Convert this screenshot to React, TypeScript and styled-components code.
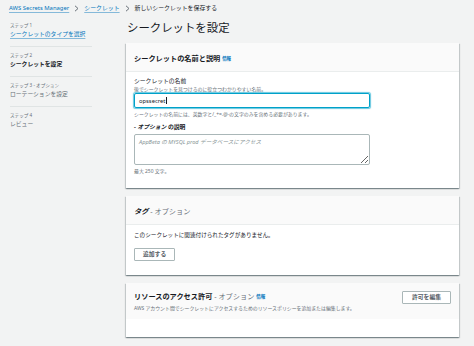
import React from 'react';
import styled, { createGlobalStyle, css } from 'styled-components';

const GlobalStyle = createGlobalStyle`
  html, body {
    margin: 0;
    padding: 0;
    background: #f2f3f3;
  }
  body {
    font-family: "Noto Sans", "Noto Sans CJK JP", sans-serif;
    color: #16191f;
  }
  * {
    box-sizing: border-box;
  }
`;

const steps = [
  { label: 'ステップ 1', name: 'シークレットのタイプを選択', state: 'link' },
  { label: 'ステップ 2', name: 'シークレットを設定', state: 'current' },
  { label: 'ステップ 3 - オプション', name: 'ローテーションを設定', state: 'idle' },
  { label: 'ステップ 4', name: 'レビュー', state: 'idle' },
] as const;

type StepState = (typeof steps)[number]['state'];

const Chevron = () => (
  <svg width="5" height="7" viewBox="0 0 5 7">
    <polyline points="1,0.8 4,3.5 1,6.2" fill="none" stroke="#687078" strokeWidth="1" />
  </svg>
);

const App: React.FC = () => {
  return (
    <Page>
      <GlobalStyle />
      <Breadcrumbs>
        <Crumb href="#">AWS Secrets Manager</Crumb>
        <Chevron />
        <Crumb href="#">シークレット</Crumb>
        <Chevron />
        <CurrentCrumb>新しいシークレットを保存する</CurrentCrumb>
      </Breadcrumbs>

      <Main>
        <Nav>
          {steps.map((step, i) => (
            <Step key={step.label} last={i === steps.length - 1}>
              <StepLabel>{step.label}</StepLabel>
              <StepName state={step.state}>{step.name}</StepName>
            </Step>
          ))}
        </Nav>

        <Content>
          <Title>シークレットを設定</Title>

          <Card>
            <CardHeader>
              <HeaderText>
                <CardTitle>
                  シークレットの名前と説明 <Info>情報</Info>
                </CardTitle>
              </HeaderText>
            </CardHeader>
            <CardBody pad="5px 8px 13px">
              <FieldLabel>シークレットの名前</FieldLabel>
              <Hint>後でシークレットを見つけるのに役立つわかりやすい名前。</Hint>
              <TextInput>
                opssecret
                <Caret />
              </TextInput>
              <Hint top={3}>
                シークレットの名前には、英数字と/_+=.@-の文字のみを含める必要があります。
              </Hint>
              <FieldLabel top={5}>
                - <i>オプション</i> の説明
              </FieldLabel>
              <TextArea placeholder="AppBeta の MYSQL prod データベースにアクセス" />
              <Hint top={3}>最大 250 文字。</Hint>
            </CardBody>
          </Card>

          <Card>
            <CardHeader>
              <HeaderText>
                <CardTitle>
                  <i>タグ</i> <Optional>- オプション</Optional>
                </CardTitle>
              </HeaderText>
            </CardHeader>
            <CardBody pad="6px 8px 14px">
              <BodyText>このシークレットに関連付けられたタグがありません。</BodyText>
              <Button>追加する</Button>
            </CardBody>
          </Card>

          <Card>
            <CardHeader plain>
              <HeaderText>
                <CardTitle>
                  リソースのアクセス許可 <Optional>- オプション</Optional> <Info>情報</Info>
                </CardTitle>
                <HeaderDesc>
                  AWS アカウント間でシークレットにアクセスするためのリソースポリシーを追加または編集します。
                </HeaderDesc>
              </HeaderText>
              <Button small>許可を編集</Button>
            </CardHeader>
            <CardBody pad="0" style={{ height: 18 }} />
          </Card>
        </Content>
      </Main>
    </Page>
  );
};

export default App;

const Page = styled.div`
  width: 474px;
  height: 346px;
  overflow: hidden;
`;

const Breadcrumbs = styled.nav`
  display: flex;
  align-items: center;
  gap: 5px;
  height: 14px;
  padding: 2px 0 0 9px;
  font-size: 5.9px;
  line-height: 12px;
`;

const Crumb = styled.a`
  color: #0073bb;
  text-decoration: underline;
  text-decoration-color: rgba(0, 115, 187, 0.45);
  text-underline-offset: 1.5px;
`;

const CurrentCrumb = styled.span`
  color: #16191f;
`;

const Main = styled.div`
  display: grid;
  grid-template-columns: 82px 1fr;
  column-gap: 34px;
  padding: 0 15px 0 10px;
`;

const Nav = styled.div`
  display: flex;
  flex-direction: column;
  padding-top: 3px;
`;

const Step = styled.div<{ last?: boolean }>`
  display: flex;
  flex-direction: column;
  padding: 4px 0 7px;
  border-bottom: ${(p) => (p.last ? 'none' : '1px solid #e0e4e4')};
`;

const StepLabel = styled.span`
  font-size: 4.6px;
  line-height: 8px;
  color: #687078;
`;

const StepName = styled.span<{ state: StepState }>`
  font-size: 5.8px;
  line-height: 10px;
  color: #687078;
  ${(p) =>
    p.state === 'link' &&
    css`
      color: #0073bb;
      text-decoration: underline;
      text-decoration-color: rgba(0, 115, 187, 0.45);
      text-underline-offset: 1.5px;
    `}
  ${(p) =>
    p.state === 'current' &&
    css`
      color: #16191f;
      font-weight: 700;
    `}
`;

const Content = styled.div`
  display: flex;
  flex-direction: column;
  gap: 8px;
`;

const Title = styled.h1`
  margin: 6px 0 -1px 1px;
  font-size: 11.4px;
  line-height: 16px;
  font-weight: 400;
  color: #16191f;
`;

const Card = styled.section`
  background: #fff;
  box-shadow: 0 1px 1px 0 rgba(0, 28, 36, 0.3), 1px 1px 1px 0 rgba(0, 28, 36, 0.15),
    -1px 1px 1px 0 rgba(0, 28, 36, 0.15);
`;

const CardHeader = styled.header<{ plain?: boolean }>`
  display: flex;
  align-items: flex-start;
  justify-content: space-between;
  gap: 8px;
  background: #fafafa;
  padding: ${(p) => (p.plain ? '8px 8px 7px' : '10px 8px 7px')};
  border-bottom: ${(p) => (p.plain ? 'none' : '1px solid #eaeded')};
`;

const HeaderText = styled.div`
  display: flex;
  flex-direction: column;
`;

const CardTitle = styled.h2`
  margin: 0;
  font-size: 7.2px;
  line-height: 11px;
  font-weight: 700;
  color: #16191f;
`;

const Optional = styled.span`
  font-weight: 400;
  color: #687078;
`;

const Info = styled.a`
  font-size: 4.5px;
  font-weight: 700;
  color: #0073bb;
  vertical-align: 1px;
`;

const HeaderDesc = styled.p`
  margin: 3px 0 0;
  font-size: 4.9px;
  line-height: 7px;
  color: #687078;
`;

const CardBody = styled.div<{ pad: string }>`
  display: flex;
  flex-direction: column;
  align-items: flex-start;
  padding: ${(p) => p.pad};
`;

const FieldLabel = styled.label<{ top?: number }>`
  margin-top: ${(p) => p.top ?? 0}px;
  font-size: 5.8px;
  line-height: 9px;
  color: #16191f;
  i {
    font-weight: 700;
  }
  font-weight: ${(p) => (p.top ? 700 : 400)};
`;

const Hint = styled.span<{ top?: number }>`
  margin-top: ${(p) => p.top ?? 0}px;
  font-size: 4.9px;
  line-height: 7px;
  color: #687078;
`;

const TextInput = styled.div`
  display: flex;
  align-items: center;
  width: 236px;
  height: 15px;
  padding: 0 4px;
  border: 1px solid #00a1c9;
  border-radius: 2px;
  box-shadow: 0 0 1px 0.5px rgba(0, 161, 201, 0.6);
  font-size: 5.8px;
  color: #16191f;
`;

const Caret = styled.span`
  width: 0.6px;
  height: 7px;
  margin-left: 0.5px;
  background: #16191f;
`;

const TextArea = styled.textarea`
  margin-top: 2px;
  width: 236px;
  height: 31px;
  padding: 3px 4px;
  border: 1px solid #aab7b8;
  border-radius: 2px;
  font-family: "Noto Sans", "Noto Sans CJK JP", sans-serif;
  font-size: 5.6px;
  line-height: 8px;
  color: #16191f;
  outline: none;
  &::placeholder {
    color: #879596;
    font-style: italic;
  }
`;

const BodyText = styled.p`
  margin: 0;
  font-size: 5.6px;
  line-height: 8px;
  color: #16191f;
`;

const Button = styled.button<{ small?: boolean }>`
  margin-top: ${(p) => (p.small ? 0 : 9)}px;
  height: 13px;
  padding: 0 ${(p) => (p.small ? 9 : 8)}px;
  flex-shrink: 0;
  background: #fff;
  border: 1px solid #aab7b8;
  border-radius: 1px;
  font-family: "Noto Sans", "Noto Sans CJK JP", sans-serif;
  font-size: 5.8px;
  font-weight: 700;
  color: #545b64;
  line-height: 11px;
`;
